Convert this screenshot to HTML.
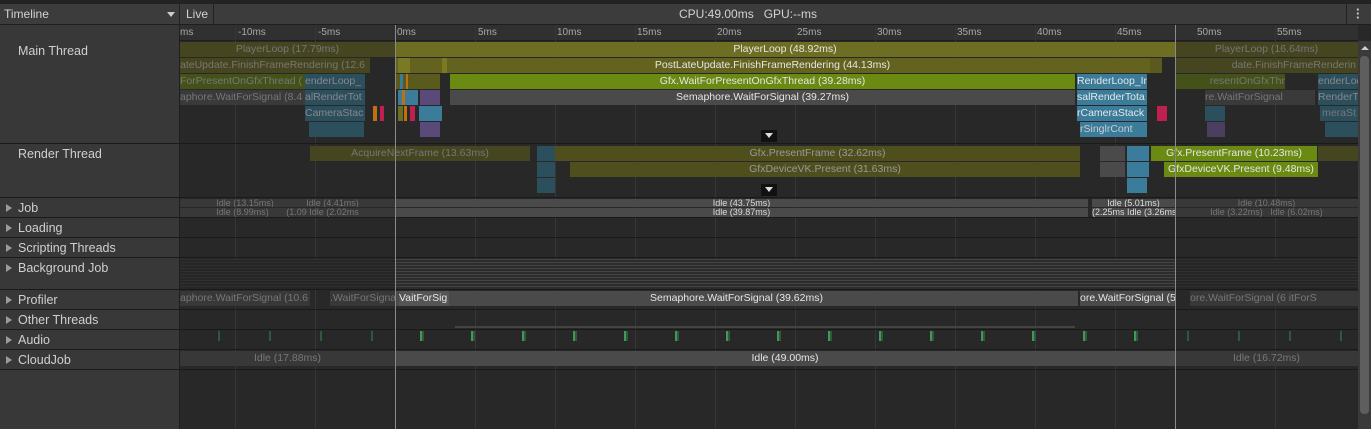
<!DOCTYPE html>
<html><head><meta charset="utf-8"><style>
*{margin:0;padding:0;box-sizing:border-box}
body{width:1371px;height:429px;overflow:hidden;background:#282828;font-family:"Liberation Sans",sans-serif;font-size:11px;color:#c4c4c4;position:relative}
.a{position:absolute}
.b{position:absolute;height:15px;overflow:hidden;white-space:nowrap;text-align:center;line-height:15px;font-size:10.5px}
.lbl{position:absolute;left:18px;font-size:12.5px;color:#d0d0d0}
.tri{position:absolute;left:6px;width:0;height:0;border-top:4px solid transparent;border-bottom:4px solid transparent;border-left:6px solid #9a9a9a}
.sep{position:absolute;left:0;width:1358px;height:1px;background:#1a1a1a}
.g{position:absolute;top:25px;width:1px;height:404px;background:#363636}
.tk{position:absolute;top:27px;font-size:10px;color:#a8a8a8}
</style></head><body>
<div class="a" style="left:0;top:0;width:1371px;height:4px;background:#232323"></div>
<div class="a" style="left:0;top:4px;width:1371px;height:21px;background:#3c3c3c;border-bottom:1px solid #1e1e1e"></div>
<div class="a" style="left:0;top:4px;width:180px;height:21px;border-right:1px solid #222;"></div>
<div class="a" style="left:4px;top:7px;font-size:12px;color:#d2d2d2">Timeline</div>
<div class="a" style="left:167px;top:12px;width:0;height:0;border-left:4px solid transparent;border-right:4px solid transparent;border-top:5px solid #ccc"></div>
<div class="a" style="left:181px;top:4px;width:33px;height:21px;border-right:1px solid #222"></div>
<div class="a" style="left:186px;top:7px;font-size:12px;color:#d2d2d2">Live</div>
<div class="a" style="left:679px;top:7px;font-size:12px;color:#d2d2d2">CPU:49.00ms&nbsp;&nbsp;&nbsp;GPU:--ms</div>
<div class="a" style="left:1346px;top:4px;width:1px;height:21px;background:#222"></div>
<div class="a" style="left:1356px;top:8px;font-size:13px;font-weight:bold;color:#ccc;line-height:4px">·<br>·<br>·</div>
<div class="a" style="left:0;top:25px;width:180px;height:404px;background:#383838;border-right:1px solid #1f1f1f"></div>
<div class="a" style="left:1358px;top:41px;width:13px;height:388px;background:#3a3a3a"></div>
<div class="a" style="left:1360px;top:56px;width:9px;height:358px;background:#5e5e5e;border-radius:4px"></div>
<div class="a" style="left:1361px;top:46px;width:0;height:0;border-left:4px solid transparent;border-right:4px solid transparent;border-bottom:4px solid #ccc"></div>
<div class="a" style="left:180px;top:25px;width:1178px;height:16px;background:#303030;border-bottom:1px solid #1e1e1e"></div>
<div class="g" style="left:235px"></div><div class="g" style="left:315px"></div><div class="g" style="left:475px"></div><div class="g" style="left:555px"></div><div class="g" style="left:635px"></div><div class="g" style="left:715px"></div><div class="g" style="left:795px"></div><div class="g" style="left:875px"></div><div class="g" style="left:955px"></div><div class="g" style="left:1035px"></div><div class="g" style="left:1115px"></div><div class="g" style="left:1275px"></div>
<div class="tk" style="left:180px">ms</div><div class="tk" style="left:238px">-10ms</div><div class="tk" style="left:318px">-5ms</div><div class="tk" style="left:397px">0ms</div><div class="tk" style="left:478px">5ms</div><div class="tk" style="left:557px">10ms</div><div class="tk" style="left:637px">15ms</div><div class="tk" style="left:717px">20ms</div><div class="tk" style="left:797px">25ms</div><div class="tk" style="left:877px">30ms</div><div class="tk" style="left:957px">35ms</div><div class="tk" style="left:1037px">40ms</div><div class="tk" style="left:1117px">45ms</div><div class="tk" style="left:1197px">50ms</div><div class="tk" style="left:1277px">55ms</div>

<div class="b" style="left:180px;top:42px;width:215px;background:#45451f;color:#777">PlayerLoop (17.79ms)</div>
<div class="b" style="left:395px;top:42px;width:780px;background:#6e6e22;color:#e6e6e6">PlayerLoop (48.92ms)</div>
<div class="b" style="left:1175px;top:42px;width:183px;background:#45451f;color:#777">PlayerLoop (16.64ms)</div>

<div class="b" style="left:180px;top:58px;width:190px;background:#45451f;color:#777;text-align:left">ateUpdate.FinishFrameRendering (12.6</div>
<div class="b" style="left:395px;top:58px;width:755px;background:#63631f;color:#e6e6e6">PostLateUpdate.FinishFrameRendering (44.13ms)</div>
<div class="b" style="left:398px;top:58px;width:12px;background:#7a7a22"></div>
<div class="b" style="left:442px;top:58px;width:5px;background:#7a7a22"></div>
<div class="b" style="left:1150px;top:58px;width:12px;background:#5a5a1e"></div>
<div class="b" style="left:1175px;top:58px;width:183px;background:#45451f;color:#777;text-align:right;padding-right:2px">date.FinishFrameRenderin</div>

<div class="b" style="left:180px;top:74px;width:125px;background:#44521a;color:#777;text-align:left">ForPresentOnGfxThread (</div>
<div class="b" style="left:305px;top:74px;width:60px;background:#2c4f5e;color:#888;text-align:left">enderLoop_</div>
<div class="b" style="left:395px;top:74px;width:45px;background:#5a5a1e"></div>
<div class="b" style="left:400px;top:74px;width:3px;background:#3a7c99"></div>
<div class="b" style="left:406px;top:74px;width:2px;background:#c07010"></div>
<div class="b" style="left:450px;top:74px;width:625px;background:#6a8a12;color:#e6e6e6">Gfx.WaitForPresentOnGfxThread (39.28ms)</div>
<div class="b" style="left:1077px;top:74px;width:70px;background:#3a7c99;color:#e6e6e6;text-align:left">RenderLoop_Ir</div>
<div class="b" style="left:1175px;top:74px;width:110px;background:#44521a;color:#777;text-align:right">resentOnGfxThr</div>
<div class="b" style="left:1318px;top:74px;width:40px;background:#2c4f5e;color:#888">enderLoo</div>

<div class="b" style="left:180px;top:90px;width:125px;background:#3a3a3a;color:#777;text-align:left">aphore.WaitForSignal (8.4</div>
<div class="b" style="left:305px;top:90px;width:60px;background:#2c4f5e;color:#888;text-align:left">alRenderTot</div>
<div class="b" style="left:398px;top:90px;width:20px;background:#3a7c99"></div>
<div class="b" style="left:402px;top:90px;width:3px;background:#c07010"></div>
<div class="b" style="left:420px;top:90px;width:20px;background:#5a4a7a"></div>
<div class="b" style="left:450px;top:90px;width:625px;background:#4a4a4a;color:#e6e6e6">Semaphore.WaitForSignal (39.27ms)</div>
<div class="b" style="left:1077px;top:90px;width:70px;background:#3a7c99;color:#e6e6e6;text-align:left">salRenderTota</div>
<div class="b" style="left:1205px;top:90px;width:110px;background:#3a3a3a;color:#777;text-align:left">re.WaitForSignal</div>
<div class="b" style="left:1318px;top:90px;width:40px;background:#2c4f5e;color:#888">RenderT</div>

<div class="b" style="left:305px;top:106px;width:60px;background:#2c4f5e;color:#888;text-align:left">CameraStac</div>
<div class="b" style="left:419px;top:106px;width:23px;background:#3a7c99"></div>
<div class="b" style="left:1077px;top:106px;width:70px;background:#3a7c99;color:#e6e6e6;text-align:left">rCameraStack</div>
<div class="b" style="left:1157px;top:106px;width:10px;background:#c02050"></div>
<div class="b" style="left:1205px;top:106px;width:20px;background:#2c4f5e"></div>
<div class="b" style="left:1320px;top:106px;width:38px;background:#2c4f5e;color:#777">meraSt</div>
<div class="b" style="left:398px;top:106px;width:5px;background:#6e6e22"></div>
<div class="b" style="left:404px;top:106px;width:3px;background:#c07010"></div>
<div class="b" style="left:410px;top:106px;width:5px;background:#c02050"></div>
<div class="b" style="left:373px;top:106px;width:4px;background:#c07010"></div>
<div class="b" style="left:380px;top:106px;width:4px;background:#c02050"></div>
<div class="b" style="left:309px;top:122px;width:55px;background:#2c4f5e"></div>
<div class="b" style="left:420px;top:122px;width:20px;background:#5a4a7a"></div>
<div class="b" style="left:1080px;top:122px;width:67px;background:#3a7c99;color:#ccc;text-align:left">rSinglrCont</div>
<div class="b" style="left:1207px;top:122px;width:18px;background:#4a3f60"></div>
<div class="b" style="left:1325px;top:122px;width:33px;background:#2c4f5e"></div>
<div class="a" style="left:761px;top:130px;width:16px;height:12px;background:#111"></div>
<div class="a" style="left:765px;top:133px;width:0;height:0;border-left:4px solid transparent;border-right:4px solid transparent;border-top:5px solid #ddd"></div>
<div class="sep" style="top:143px"></div>

<div class="b" style="left:310px;top:146px;width:220px;background:#45451f;color:#777">AcquireNextFrame (13.63ms)</div>
<div class="b" style="left:537px;top:146px;width:18px;background:#2c4f5e"></div>
<div class="b" style="left:555px;top:146px;width:525px;background:#4f4f1e;color:#999">Gfx.PresentFrame (32.62ms)</div>
<div class="b" style="left:1100px;top:146px;width:25px;background:#4a4a4a"></div>
<div class="b" style="left:1127px;top:146px;width:22px;background:#3a7c99"></div>
<div class="b" style="left:1151px;top:146px;width:166px;background:#6a8a12;color:#e6e6e6">Gfx.PresentFrame (10.23ms)</div>
<div class="b" style="left:1318px;top:146px;width:40px;background:#45451f"></div>
<div class="b" style="left:537px;top:162px;width:18px;background:#2c4f5e"></div>
<div class="b" style="left:570px;top:162px;width:510px;background:#4f4f1e;color:#999">GfxDeviceVK.Present (31.63ms)</div>
<div class="b" style="left:1100px;top:162px;width:25px;background:#4a4a4a"></div>
<div class="b" style="left:1127px;top:162px;width:22px;background:#3a7c99"></div>
<div class="b" style="left:1164px;top:162px;width:154px;background:#6a8a12;color:#e6e6e6">GfxDeviceVK.Present (9.48ms)</div>
<div class="b" style="left:537px;top:178px;width:18px;background:#2c4f5e"></div>
<div class="b" style="left:1127px;top:178px;width:20px;background:#3a7c99"></div>
<div class="a" style="left:761px;top:184px;width:16px;height:12px;background:#111"></div>
<div class="a" style="left:765px;top:187px;width:0;height:0;border-left:4px solid transparent;border-right:4px solid transparent;border-top:5px solid #ddd"></div>
<div class="sep" style="top:197px"></div>

<div class="b" style="left:180px;top:199px;width:215px;height:8px;background:#383838;line-height:8px;font-size:9px;color:#777">Idle (13.15ms) &nbsp;&nbsp;&nbsp;&nbsp;&nbsp;&nbsp;&nbsp;&nbsp;&nbsp;&nbsp;&nbsp; Idle (4.41ms)</div>
<div class="b" style="left:395px;top:199px;width:693px;height:8px;background:#4a4a4a;line-height:8px;font-size:9px;color:#ddd">Idle (43.75ms)</div>
<div class="b" style="left:1092px;top:199px;width:83px;height:8px;background:#4a4a4a;line-height:8px;font-size:9px;color:#ddd">Idle (5.01ms)</div>
<div class="b" style="left:1175px;top:199px;width:183px;height:8px;background:#383838;line-height:8px;font-size:9px;color:#777">Idle (10.48ms)</div>
<div class="b" style="left:180px;top:208px;width:215px;height:9px;background:#383838;line-height:9px;font-size:9px;color:#777">Idle (8.99ms) &nbsp;&nbsp;&nbsp;&nbsp;&nbsp; (1.09 Idle (2.02ms</div>
<div class="b" style="left:395px;top:208px;width:693px;height:9px;background:#4a4a4a;line-height:9px;font-size:9px;color:#ddd">Idle (39.87ms)</div>
<div class="b" style="left:1092px;top:208px;width:83px;height:9px;background:#4a4a4a;line-height:9px;font-size:9px;color:#ddd">(2.25ms Idle (3.26ms</div>
<div class="b" style="left:1175px;top:208px;width:183px;height:9px;background:#383838;line-height:9px;font-size:9px;color:#777">Idle (3.22ms) &nbsp; Idle (6.02ms)</div>
<div class="sep" style="top:217px"></div>
<div class="sep" style="top:237px"></div>
<div class="sep" style="top:257px"></div>
<div class="a" style="left:180px;top:259px;width:215px;height:30px;background:repeating-linear-gradient(#2f2f2f 0 1px,#262626 1px 3px)"></div>
<div class="a" style="left:395px;top:259px;width:780px;height:30px;background:repeating-linear-gradient(#444 0 1px,#2c2c2c 1px 3px)"></div>
<div class="a" style="left:1175px;top:259px;width:183px;height:30px;background:repeating-linear-gradient(#2f2f2f 0 1px,#262626 1px 3px)"></div>
<div class="sep" style="top:289px"></div>
<div class="b" style="left:180px;top:291px;width:130px;background:#383838;color:#777;text-align:left">aphore.WaitForSignal (10.6</div>
<div class="b" style="left:330px;top:291px;width:65px;background:#383838;color:#777;text-align:left">.WaitForSigna</div>
<div class="b" style="left:395px;top:291px;width:683px;background:#4a4a4a;color:#e6e6e6">Semaphore.WaitForSignal (39.62ms)</div>
<div class="b" style="left:399px;top:291px;width:50px;background:#555;color:#e6e6e6;text-align:left">VaitForSig</div>
<div class="b" style="left:1080px;top:291px;width:95px;background:#4a4a4a;color:#e6e6e6;text-align:left">ore.WaitForSignal (5</div>
<div class="b" style="left:1190px;top:291px;width:168px;background:#383838;color:#777;text-align:left">ore.WaitForSignal (6 itForS</div>
<div class="sep" style="top:309px"></div>
<div class="a" style="left:455px;top:326px;width:620px;height:2px;background:#444"></div>
<div class="sep" style="top:329px"></div>
<div class="a" style="left:180px;top:331px;width:1178px;height:18px;background:repeating-linear-gradient(90deg,transparent 0 38px,#2f5f3a 38px 40px,transparent 40px 51px);opacity:.9;clip-path:inset(0 0 8px 0)"></div>
<div class="a" style="left:395px;top:331px;width:780px;height:10px;background:repeating-linear-gradient(90deg,transparent 0 25px,#3e9a55 25px 27px,transparent 27px 51px)"></div>
<div class="sep" style="top:349px"></div>
<div class="b" style="left:180px;top:351px;width:215px;background:#383838;color:#777">Idle (17.88ms)</div>
<div class="b" style="left:395px;top:351px;width:780px;background:#4a4a4a;color:#e6e6e6">Idle (49.00ms)</div>
<div class="b" style="left:1175px;top:351px;width:183px;background:#383838;color:#777">Idle (16.72ms)</div>
<div class="sep" style="top:369px"></div>
<div class="a" style="left:395px;top:25px;width:1px;height:404px;background:#8a8a8a"></div>
<div class="a" style="left:1175px;top:25px;width:1px;height:404px;background:#8a8a8a"></div>

<div class="lbl" style="top:44px">Main Thread</div>
<div class="lbl" style="top:147px">Render Thread</div>
<div class="tri" style="top:204px"></div><div class="lbl" style="top:201px">Job</div>
<div class="tri" style="top:224px"></div><div class="lbl" style="top:221px">Loading</div>
<div class="tri" style="top:244px"></div><div class="lbl" style="top:241px">Scripting Threads</div>
<div class="tri" style="top:264px"></div><div class="lbl" style="top:261px">Background Job</div>
<div class="tri" style="top:296px"></div><div class="lbl" style="top:293px">Profiler</div>
<div class="tri" style="top:316px"></div><div class="lbl" style="top:313px">Other Threads</div>
<div class="tri" style="top:336px"></div><div class="lbl" style="top:333px">Audio</div>
<div class="tri" style="top:356px"></div><div class="lbl" style="top:353px">CloudJob</div>
</body></html>
